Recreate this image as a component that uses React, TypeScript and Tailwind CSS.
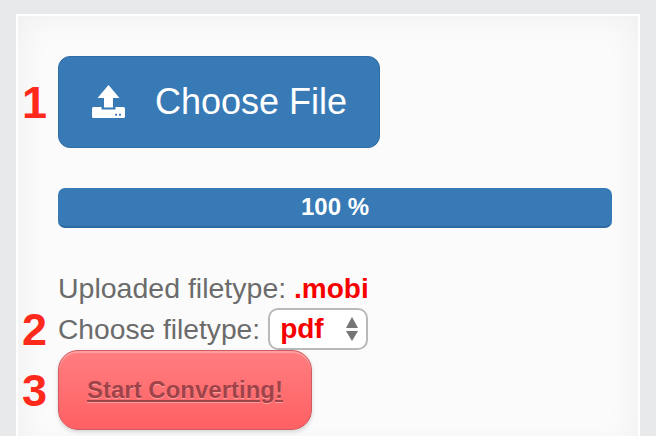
const UploadIcon = () => (
  <svg width="34" height="34" viewBox="0 0 34 34" className="shrink-0">
    <path d="M16.5 0 L27.5 13 L21 13 L21 22.5 L12 22.5 L12 13 L5.5 13 Z" fill="white" />
    <path
      fillRule="evenodd"
      d="M1.5 22 L9.5 22 L9.5 24.5 L23.5 24.5 L23.5 22 L31.5 22 Q33 22 33 23.5 L33 31.5 Q33 33 31.5 33 L1.5 33 Q0 33 0 31.5 L0 23.5 Q0 22 1.5 22 Z M24 28.6 a1.1 1.1 0 1 0 0.01 0 Z M28 28.6 a1.1 1.1 0 1 0 0.01 0 Z"
      fill="white"
    />
  </svg>
)

const StepNumber = ({ n }: { n: number }) => (
  <div className="w-[40px] shrink-0 pl-[4px] text-[45px] leading-none font-bold text-[#ff2a1c]">{n}</div>
)

const App = () => {
  return (
    <div className="h-[436px] w-[656px] overflow-hidden bg-[#e8e9eb] pt-[14px] pl-[16px] font-['Liberation_Sans',Arial,sans-serif]">
      <div className="h-[440px] w-[624px] border-2 border-white bg-[#fbfbfb] pt-[40px] shadow-[inset_0_0_34px_rgba(0,0,0,0.055)]">
        <div className="flex items-center">
          <StepNumber n={1} />
          <button className="flex h-[92px] w-[322px] items-center rounded-[12px] border border-[#2e6da4] bg-[#387ab5] pl-[33px] text-[36px] text-white">
            <UploadIcon />
            <span className="ml-[29px]">Choose File</span>
          </button>
        </div>

        <div className="mt-[40px] ml-[40px] flex h-[40px] w-[554px] items-center justify-center rounded-[7px] border-b-2 border-[#2d6a9f] bg-[#387ab5] text-[24px] font-bold text-white">
          100 %
        </div>

        <div className="mt-[40px] ml-[40px] h-[40px] text-[28.5px] leading-[40px] text-[#6b6b6b]">
          Uploaded filetype: <span className="text-[28px] font-bold text-[#f60000]">.mobi</span>
        </div>

        <div className="flex h-[42px] items-center">
          <StepNumber n={2} />
          <span className="text-[28.2px] text-[#6b6b6b]">Choose filetype:</span>
          <div className="ml-[8px] flex h-[42px] w-[100px] items-center justify-between rounded-[10px] border-2 border-[#b9b9b9] bg-white pr-[8px] pl-[10px]">
            <span className="text-[28px] font-bold text-[#f60000]">pdf</span>
            <svg width="12" height="30" viewBox="0 0 12 30">
              <path d="M6 3 L12 14 L0 14 Z" fill="#757575" />
              <path d="M6 27 L12 17 L0 17 Z" fill="#757575" />
            </svg>
          </div>
        </div>

        <div className="flex items-center">
          <StepNumber n={3} />
          <button className="flex h-[80px] w-[254px] items-center justify-center rounded-[20px] border border-[#cf5a60] bg-gradient-to-b from-[#ff7d80] to-[#ff6063] text-[24px] font-bold text-[#a04349] underline shadow-[inset_0_2px_0_rgba(255,255,255,0.25),0_2px_4px_rgba(0,0,0,0.15)] [text-shadow:0_1px_0_rgba(255,255,255,0.35)]">
            Start Converting!
          </button>
        </div>
      </div>
    </div>
  )
}

export default App
